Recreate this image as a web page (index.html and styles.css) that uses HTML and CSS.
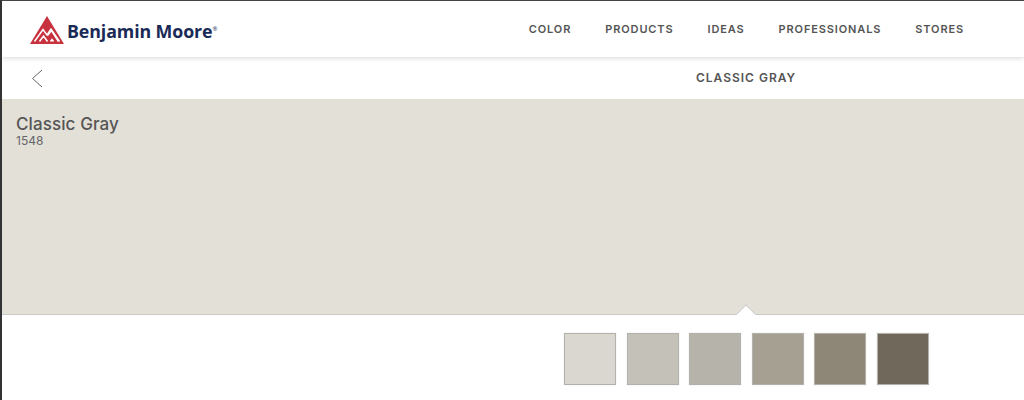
FILE: index.html
```html
<!DOCTYPE html>
<html>
  <head>
    <title>Classic Gray</title>
    <link rel="stylesheet" href="styles.css">
  </head>
  <body>
    <div class="page">
      <header class="site-header">
        <a class="logo">
          <!-- Red mountain mark -->
          <svg class="logo-mark" viewBox="0 0 34 28">
            <path d="M17 0L34 28H0z" fill="#c8323f"></path>
            <path d="M4.500 25.500L13 13.500l4 5.500 4-6 8.500 12.500" fill="none" stroke="#fff" stroke-width="1.500"></path>
            <path d="M9.500 25.500l4-5.500 4 5.500M17.500 19.500l4-5 7 11M20.500 25.500l1.500-2 1.500 2" fill="none" stroke="#fff" stroke-width="1.500"></path>
          </svg>
          <span class="logo-text">Benjamin Moore<sup class="logo-reg">®</sup></span>
        </a>
        <nav class="main-nav">
          <a>COLOR</a>
          <a>PRODUCTS</a>
          <a>IDEAS</a>
          <a>PROFESSIONALS</a>
          <a>STORES</a>
        </nav>
      </header>
      <div class="sub-bar">
        <div class="back">
          <svg class="back-icon" viewBox="0 0 12 19" fill="none" stroke="#666" stroke-width="1">
            <path d="M11 1L1.500 9.500 11 18"></path>
          </svg>
        </div>
        <div class="sub-title">CLASSIC GRAY</div>
      </div>
      <section class="color-panel">
        <h1 class="color-name">Classic Gray</h1>
        <div class="color-number">1548</div>
        <span class="pointer"></span>
      </section>
      <div class="swatches">
        <div class="swatch swatch-1"></div>
        <div class="swatch swatch-2"></div>
        <div class="swatch swatch-3"></div>
        <div class="swatch swatch-4"></div>
        <div class="swatch swatch-5"></div>
        <div class="swatch swatch-6"></div>
      </div>
    </div>
  </body>
</html>
```

FILE: styles.css
```css
:root {
  --panel: #e3e0d8;
  --text: #555;
  --line: #cbcbc6;
}

html,
body {
  margin: 0;
  padding: 0;
  background: #fff;
  font-family: "Inter", Arial, sans-serif;
  color: var(--text);
}

.page {
  height: 399px;
  overflow: hidden;
  border-top: 1px solid #444;
  border-left: 2px solid #333;
}

.site-header {
  position: relative;
  z-index: 1;
  height: 56px;
  display: flex;
  align-items: center;
  justify-content: space-between;
  padding: 0 60px 0 28px;
  background: #fff;
  box-shadow: 0 1px 5px rgba(0, 0, 0, 0.16);
}

.logo {
  display: flex;
  align-items: center;
  gap: 4px;
}

.logo-mark {
  width: 34px;
  height: 28px;
  margin-top: 1px;
}

.logo-text {
  font-family: "Open Sans", Arial, sans-serif;
  font-size: 17.8px;
  font-weight: 700;
  letter-spacing: -0.1px;
  color: #1a2a56;
  margin-top: 4px;
  margin-left: -1px;
}

.logo-reg {
  font-size: 6px;
  font-weight: 400;
  vertical-align: 7px;
  line-height: 0;
}

.main-nav {
  display: flex;
  gap: 34px;
}

.main-nav a {
  font-size: 11px;
  font-weight: 600;
  letter-spacing: 0.87px;
  line-height: 14px;
  color: var(--text);
}

.sub-bar {
  height: 42px;
  display: grid;
  grid-template-columns: 466px 1fr;
  align-items: center;
}

.back {
  padding-left: 29px;
}

.back-icon {
  display: block;
  width: 12px;
  height: 19px;
}

.sub-title {
  text-align: center;
  font-size: 12px;
  font-weight: 600;
  letter-spacing: 1px;
  line-height: 14px;
  padding-bottom: 1px;
  color: var(--text);
}

.color-panel {
  position: relative;
  height: 216px;
  padding: 16px 14px 0;
  box-sizing: border-box;
  background: var(--panel);
  border-bottom: 1px solid var(--line);
}

.color-name {
  margin: 0;
  font-size: 17px;
  font-weight: 500;
  line-height: 18px;
  letter-spacing: 0.1px;
  color: var(--text);
}

.color-number {
  font-size: 12px;
  line-height: 14px;
  margin-top: 1px;
  color: #666;
}

/* notch pointing at the swatch row */
.pointer {
  position: absolute;
  left: 737px;
  bottom: -7px;
  width: 13px;
  height: 13px;
  background: #fff;
  border-top: 1px solid var(--line);
  border-left: 1px solid var(--line);
  transform: rotate(45deg);
}

.swatches {
  display: flex;
  gap: 10.6px;
  padding: 18px 0 0 562px;
}

.swatch {
  width: 50px;
  height: 50px;
  border: 1px solid #b2b1ab;
  box-shadow: 0 0 0 0.5px rgba(0, 0, 0, 0.06);
}

.swatch-1 { background: #d9d7d0; }
.swatch-2 { background: #c4c1b9; }
.swatch-3 { background: #b6b3aa; }
.swatch-4 { background: #a6a092; }
.swatch-5 { background: #8e8778; }
.swatch-6 { background: #70695b; }
```
